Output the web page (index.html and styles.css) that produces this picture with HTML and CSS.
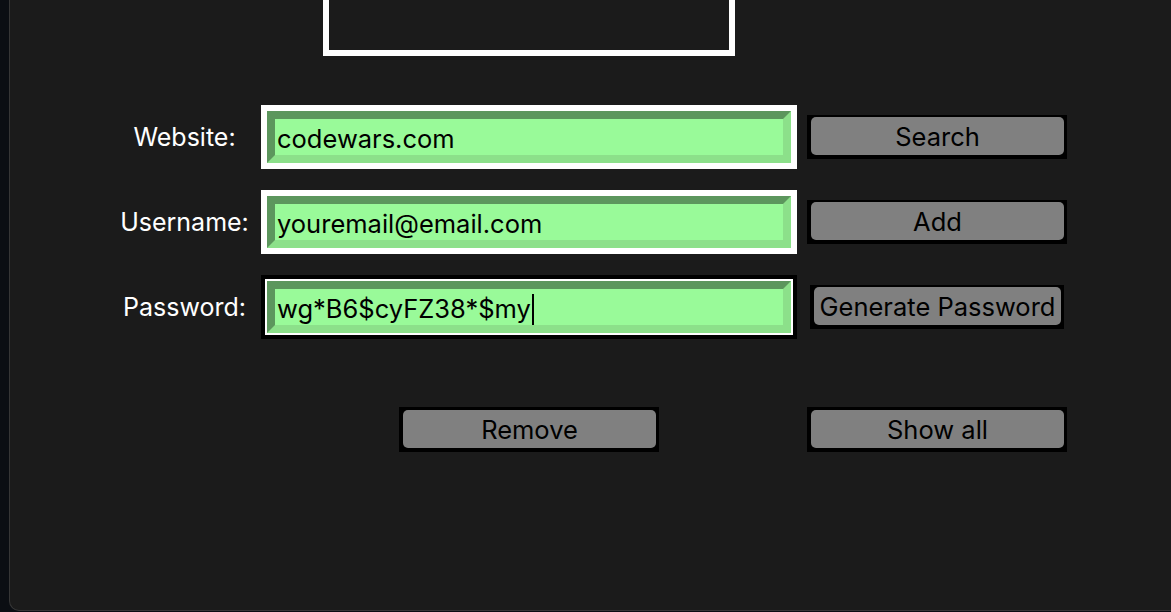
FILE: index.html
```html
<!DOCTYPE html>
<html lang="en">
<head>
<meta charset="utf-8">
<title>Password Manager</title>
<link rel="stylesheet" href="styles.css">
</head>
<body>
<div class="window">
  <div class="row row-canvas">
    <div></div>
    <div class="canvas"></div>
    <div></div>
  </div>
  <div class="row row-1">
    <div class="label">Website:</div>
    <div class="entry entry-focus"><div class="entry-relief"><div class="entry-field">codewars.com</div></div></div>
    <div class="btn-frame"><div class="btn">Search</div></div>
  </div>
  <div class="row row-2">
    <div class="label">Username:</div>
    <div class="entry entry-focus"><div class="entry-relief"><div class="entry-field">youremail@email.com</div></div></div>
    <div class="btn-frame"><div class="btn">Add</div></div>
  </div>
  <div class="row row-3">
    <div class="label">Password:</div>
    <div class="entry entry-plain"><div class="entry-relief"><div class="entry-field">wg*B6$cyFZ38*$my<span class="caret"></span></div></div></div>
    <div class="btn-frame btn-frame-narrow"><div class="btn">Generate Password</div></div>
  </div>
  <div class="row row-4">
    <div></div>
    <div class="btn-frame"><div class="btn">Remove</div></div>
    <div class="btn-frame"><div class="btn">Show all</div></div>
  </div>
</div>
</body>
</html>
```
FILE: styles.css
```css
html, body {
  margin: 0;
  padding: 0;
  height: 612px;
  overflow: hidden;
  background: #0b0e13;
  font-family: "Inter", "Liberation Sans", sans-serif;
}

.window {
  box-sizing: border-box;
  margin-left: 9px;
  height: 611px;
  background: #1b1b1b;
  border-left: 1px solid #363636;
  border-bottom: 1px solid #363636;
  border-bottom-left-radius: 10px;
  padding-left: 98px;
}

.row {
  display: grid;
  grid-template-columns: 153px 536px 280px;
  align-items: center;
  justify-items: center;
}

.row-canvas { height: 56px; }
.row-1 { margin-top: 49px; height: 64px; }
.row-2 { margin-top: 21px; height: 64px; }
.row-3 { margin-top: 21px; height: 64px; }
.row-4 { margin-top: 68px; height: 45px; }

.canvas {
  box-sizing: border-box;
  width: 412px;
  height: 56px;
  border: 6px solid #ffffff;
  border-top: 0;
  align-self: start;
}

.label {
  color: #ffffff;
  font-size: 25px;
  white-space: nowrap;
}

.entry {
  box-sizing: border-box;
  width: 536px;
  height: 64px;
  border: 4px solid #000000;
}
.entry-focus { border-color: #ffffff; }
.entry-plain { border-color: #000000; }

.entry-relief {
  box-sizing: border-box;
  height: 100%;
  border: 2px solid #ffffff;
}

.entry-field {
  box-sizing: border-box;
  height: 100%;
  background: #99fa99;
  border-style: solid;
  border-width: 8px;
  border-top-color: #5c965d;
  border-left-color: #5c965d;
  border-bottom-color: #8ce08a;
  border-right-color: #8ce08a;
  padding-left: 2px;
  padding-top: 2px;
  color: #000000;
  font-size: 25.5px;
  line-height: 36px;
  white-space: nowrap;
  overflow: hidden;
}

.caret {
  display: inline-block;
  width: 2px;
  height: 31px;
  margin-left: 1px;
  background: #000000;
  vertical-align: -7px;
}

.btn-frame {
  box-sizing: border-box;
  width: 260px;
  height: 44px;
  background: #000000;
  padding: 2px 3px 4px 4px;
}
.row-4 .btn-frame { height: 45px; padding-top: 3px; }
.btn-frame-narrow { width: 254px; }

.btn {
  box-sizing: border-box;
  height: 100%;
  background: #808080;
  border-radius: 5px;
  color: #000000;
  font-size: 25.5px;
  padding-top: 1px;
  display: flex;
  align-items: center;
  justify-content: center;
  white-space: nowrap;
}
```
